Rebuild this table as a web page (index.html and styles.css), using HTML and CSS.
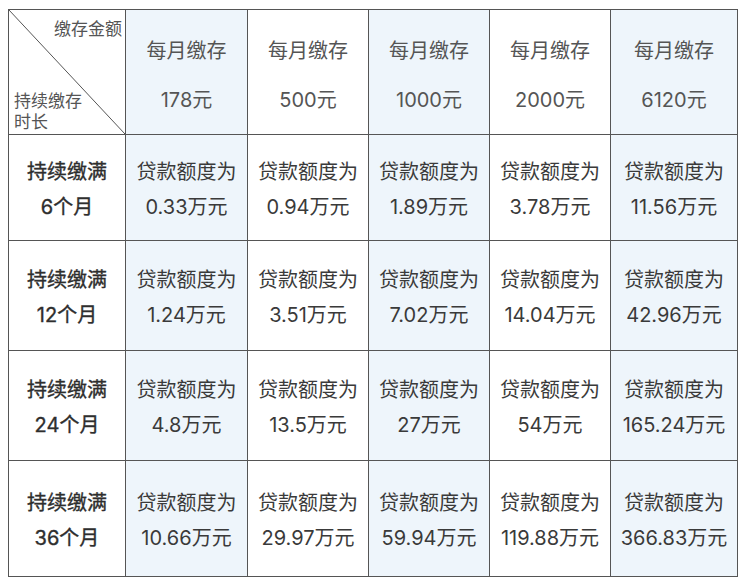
FILE: index.html
```html
<!DOCTYPE html>
<html lang="zh-CN">
<head>
<meta charset="utf-8">
<title>公积金贷款额度表</title>
<link rel="stylesheet" href="styles.css">
</head>
<body>
<div class="grid">
  <div class="cell corner">
    <svg class="diag" viewBox="0 0 100 100" preserveAspectRatio="none"><line x1="0" y1="0" x2="100" y2="100" stroke="#555" stroke-width="1" vector-effect="non-scaling-stroke"/></svg>
    <span class="corner-top">缴存金额</span>
    <span class="corner-bottom"><span class="cline">持续缴存</span><span class="cline">时长</span></span>
  </div>
  <div class="cell head blue"><span>每月缴存</span><span>178元</span></div>
  <div class="cell head"><span>每月缴存</span><span>500元</span></div>
  <div class="cell head blue"><span>每月缴存</span><span>1000元</span></div>
  <div class="cell head"><span>每月缴存</span><span>2000元</span></div>
  <div class="cell head blue"><span>每月缴存</span><span>6120元</span></div>

  <div class="cell rowhead"><span>持续缴满</span><span>6个月</span></div>
  <div class="cell data blue"><span>贷款额度为</span><span>0.33万元</span></div>
  <div class="cell data"><span>贷款额度为</span><span>0.94万元</span></div>
  <div class="cell data blue"><span>贷款额度为</span><span>1.89万元</span></div>
  <div class="cell data"><span>贷款额度为</span><span>3.78万元</span></div>
  <div class="cell data blue"><span>贷款额度为</span><span>11.56万元</span></div>

  <div class="cell rowhead"><span>持续缴满</span><span>12个月</span></div>
  <div class="cell data blue"><span>贷款额度为</span><span>1.24万元</span></div>
  <div class="cell data"><span>贷款额度为</span><span>3.51万元</span></div>
  <div class="cell data blue"><span>贷款额度为</span><span>7.02万元</span></div>
  <div class="cell data"><span>贷款额度为</span><span>14.04万元</span></div>
  <div class="cell data blue"><span>贷款额度为</span><span>42.96万元</span></div>

  <div class="cell rowhead"><span>持续缴满</span><span>24个月</span></div>
  <div class="cell data blue"><span>贷款额度为</span><span>4.8万元</span></div>
  <div class="cell data"><span>贷款额度为</span><span>13.5万元</span></div>
  <div class="cell data blue"><span>贷款额度为</span><span>27万元</span></div>
  <div class="cell data"><span>贷款额度为</span><span>54万元</span></div>
  <div class="cell data blue"><span>贷款额度为</span><span>165.24万元</span></div>

  <div class="cell rowhead"><span>持续缴满</span><span>36个月</span></div>
  <div class="cell data blue"><span>贷款额度为</span><span>10.66万元</span></div>
  <div class="cell data"><span>贷款额度为</span><span>29.97万元</span></div>
  <div class="cell data blue"><span>贷款额度为</span><span>59.94万元</span></div>
  <div class="cell data"><span>贷款额度为</span><span>119.88万元</span></div>
  <div class="cell data blue"><span>贷款额度为</span><span>366.83万元</span></div>
</div>
</body>
</html>
```
FILE: styles.css
```css
html, body {
  background: #ffffff;
}
body {
  margin: 9px 0 0 8px;
  font-family: Inter, "Noto Sans CJK SC", sans-serif;
  color: #333;
}
.grid {
  display: grid;
  grid-template-columns: 116px 121px 120px 120px 120px 126px;
  grid-template-rows: 124px 105px 109px 109px 115px;
  gap: 1px;
  padding: 1px;
  background: #555;
  width: 728px;
}
.cell {
  background: #ffffff;
  display: flex;
  flex-direction: column;
  align-items: center;
  justify-content: center;
  font-size: 20px;
  white-space: nowrap;
}
.cell.blue {
  background: #eef5fb;
}
.head {
  color: #555;
  line-height: 28px;
  gap: 21px;
  padding-top: 6px;
}
.data, .rowhead {
  line-height: 35px;
  padding-top: 5px;
}
.data {
  color: #3a3a3a;
}
.rowhead {
  font-weight: 400;
  color: #2e2e2e;
  -webkit-text-stroke: 0.35px #2e2e2e;
}
.corner {
  position: relative;
  align-items: stretch;
  justify-content: space-between;
  color: #555;
  font-size: 17px;
  line-height: 21px;
  padding: 9px 3px 1px 5px;
}
.diag {
  position: absolute;
  left: 0;
  top: 0;
  width: 100%;
  height: 100%;
}
.corner-top {
  align-self: flex-end;
  position: relative;
}
.corner-bottom {
  align-self: flex-start;
  position: relative;
  display: flex;
  flex-direction: column;
}
.cline {
  display: block;
  height: 21px;
}
```
